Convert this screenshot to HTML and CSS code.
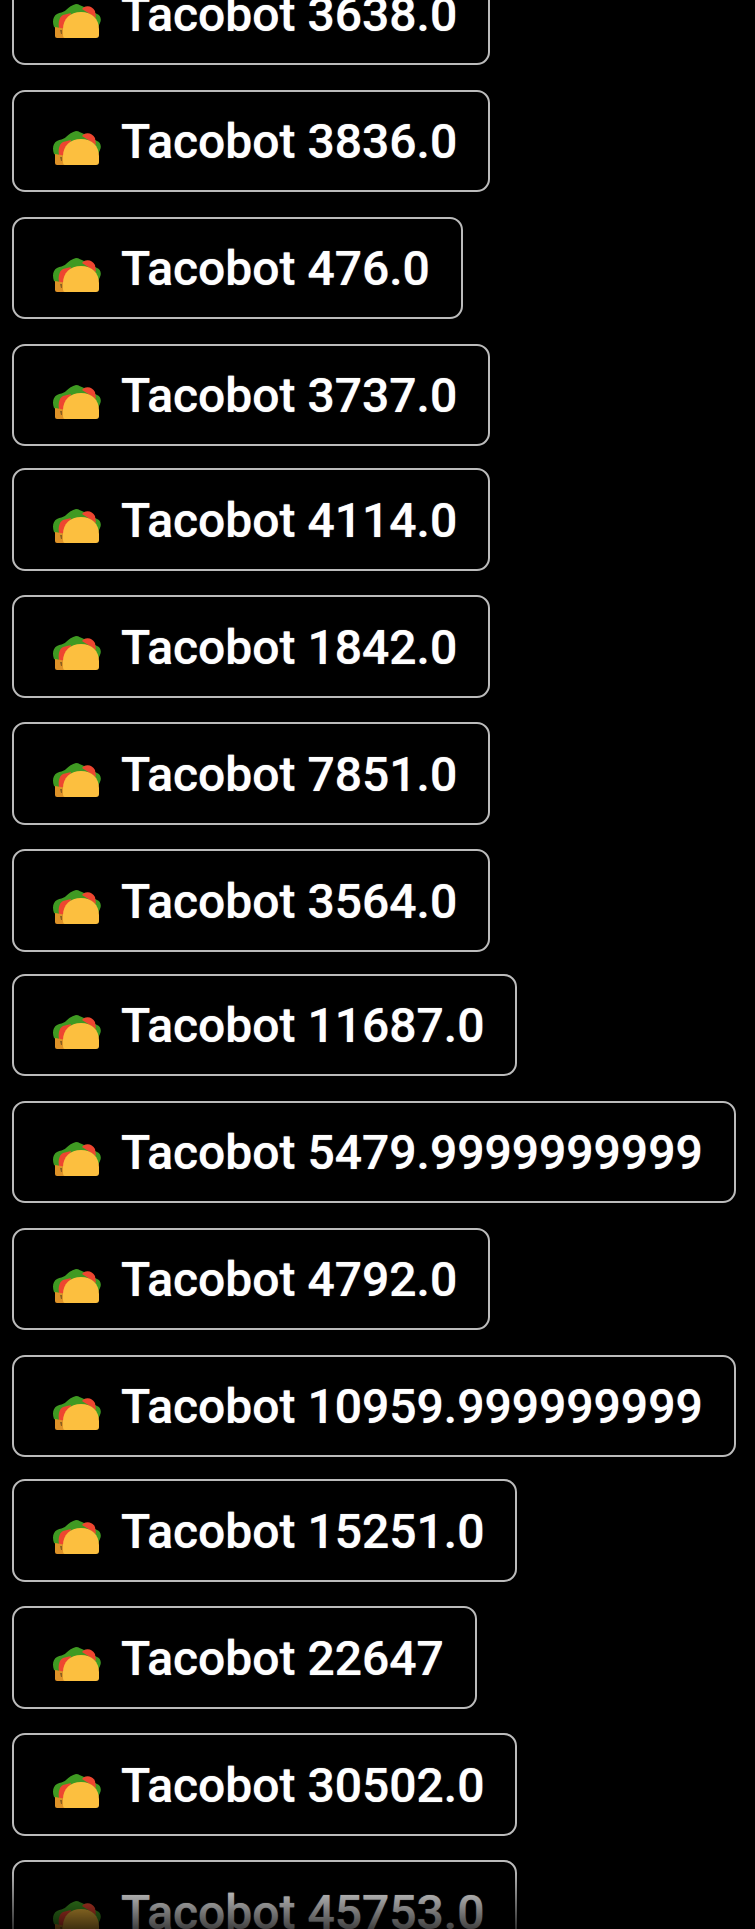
FILE: index.html
```html
<!DOCTYPE html>
<html lang="en">
<head>
  <meta charset="UTF-8">
  <title>Tacobot</title>
  <link rel="stylesheet" href="styles.css">
</head>
<body>
  <svg class="hidden" width="0" height="0">
    <symbol id="taco" viewBox="0 0 48 34">
      <path fill="#3f9a22" d="M1 23C-1 18 0 12 4 10C7 8 10 9 13 6C16 3 19 1 23 0C26 0 28 2 31 3C35 2 38 4 41 7C41 9 43 9 44 10C47 11 49 15 47 19L45 23L44 25H8L3 24Z"/>
      <path fill="#ee4630" d="M6 24C5 19 6 13 10 11L18 9L12 27Z"/>
      <path fill="#ee4630" d="M29 5C32 1 39 1 42 7L43 14Z"/>
      <path fill="#de9228" d="M2 23L8 24L14 25V34H4Q2 34 2 32Z"/>
      <path fill="#8a6020" d="M7 26H9V30H8Z"/>
      <path fill="#fcbf3f" d="M12 34Q10 34 10 31V25C10 15 17 8 28 8C39 8 46 15 46 25V31Q46 34 43 34Z"/>
    </symbol>
  </svg>
  <div class="list">
    <div class="chip"><svg class="taco"><use href="#taco"/></svg><span>Tacobot 3638.0</span></div>
    <div class="chip"><svg class="taco"><use href="#taco"/></svg><span>Tacobot 3836.0</span></div>
    <div class="chip"><svg class="taco"><use href="#taco"/></svg><span>Tacobot 476.0</span></div>
    <div class="chip"><svg class="taco"><use href="#taco"/></svg><span>Tacobot 3737.0</span></div>
    <div class="chip tight"><svg class="taco"><use href="#taco"/></svg><span>Tacobot 4114.0</span></div>
    <div class="chip"><svg class="taco"><use href="#taco"/></svg><span>Tacobot 1842.0</span></div>
    <div class="chip"><svg class="taco"><use href="#taco"/></svg><span>Tacobot 7851.0</span></div>
    <div class="chip"><svg class="taco"><use href="#taco"/></svg><span>Tacobot 3564.0</span></div>
    <div class="chip tight"><svg class="taco"><use href="#taco"/></svg><span>Tacobot 11687.0</span></div>
    <div class="chip"><svg class="taco"><use href="#taco"/></svg><span>Tacobot 5479.9999999999</span></div>
    <div class="chip"><svg class="taco"><use href="#taco"/></svg><span>Tacobot 4792.0</span></div>
    <div class="chip"><svg class="taco"><use href="#taco"/></svg><span>Tacobot 10959.999999999</span></div>
    <div class="chip tight"><svg class="taco"><use href="#taco"/></svg><span>Tacobot 15251.0</span></div>
    <div class="chip"><svg class="taco"><use href="#taco"/></svg><span>Tacobot 22647</span></div>
    <div class="chip"><svg class="taco"><use href="#taco"/></svg><span>Tacobot 30502.0</span></div>
    <div class="chip"><svg class="taco"><use href="#taco"/></svg><span>Tacobot 45753.0</span></div>
  </div>
  <div class="fade"></div>
</body>
</html>
```
FILE: styles.css
```css
html, body {
  height: 100%;
}

body {
  margin: 0;
  background-color: #000;
  color: #fff;
  font-family: Roboto, sans-serif;
  overflow: hidden;
  position: relative;
}

.hidden {
  display: block;
}

.list {
  display: flex;
  flex-direction: column;
  align-items: flex-start;
  gap: 24.5px;
  margin-top: -37.5px;
  padding-left: 12px;
}

.chip {
  display: flex;
  align-items: center;
  height: 102.5px;
  box-sizing: border-box;
  padding: 0 31px 0 39px;
  border: 2px solid #bbb;
  border-radius: 13px;
  font-size: 48px;
  font-weight: 500;
  text-shadow: 0 0 1px rgba(255, 255, 255, 0.7);
  white-space: nowrap;
}

.tight {
  margin-top: -2.5px;
}

.chip span {
  margin-top: 2px;
}

.taco {
  width: 48px;
  height: 34px;
  margin: 14px 20px 0 0;
  flex: none;
}

/* dims the last row where the list runs off */
.fade {
  position: absolute;
  left: 0;
  right: 0;
  bottom: 0;
  height: 60px;
  background: linear-gradient(to bottom, rgba(0, 0, 0, 0), rgba(0, 0, 0, 0.75));
}
```
